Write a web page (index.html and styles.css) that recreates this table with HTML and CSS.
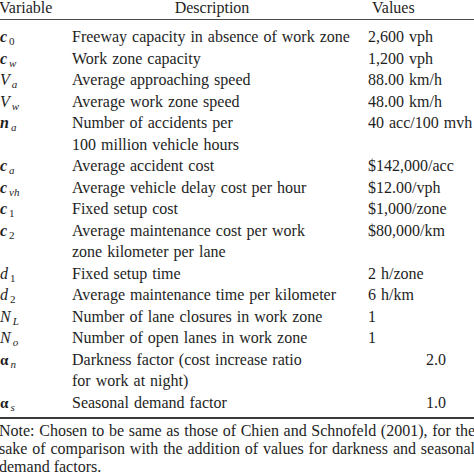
FILE: index.html
```html
<!DOCTYPE html>
<html>
<head>
<meta charset="utf-8">
<link rel="stylesheet" href="styles.css">
</head>
<body>
<div class="page">
  <div class="head">
    <div class="c1">Variable</div>
    <div class="c2 center">Description</div>
    <div class="c3 hv">Values</div>
  </div>
  <div class="body">
    <div class="row"><div class="c1"><b class="v">c</b><sub class="up">0</sub></div><div class="c2">Freeway capacity in absence of work zone</div><div class="c3">2,600 vph</div></div>
    <div class="row"><div class="c1"><b class="v">c</b><sub>w</sub></div><div class="c2">Work zone capacity</div><div class="c3">1,200 vph</div></div>
    <div class="row"><div class="c1"><i class="v">V</i><sub>a</sub></div><div class="c2">Average approaching speed</div><div class="c3">88.00 km/h</div></div>
    <div class="row"><div class="c1"><i class="v">V</i><sub>w</sub></div><div class="c2">Average work zone speed</div><div class="c3">48.00 km/h</div></div>
    <div class="row"><div class="c1"><b class="v">n</b><sub>a</sub></div><div class="c2">Number of accidents per<br>100 million vehicle hours</div><div class="c3">40 acc/100 mvh</div></div>
    <div class="row"><div class="c1"><b class="v">c</b><sub>a</sub></div><div class="c2">Average accident cost</div><div class="c3">$142,000/acc</div></div>
    <div class="row"><div class="c1"><b class="v">c</b><sub>vh</sub></div><div class="c2">Average vehicle delay cost per hour</div><div class="c3">$12.00/vph</div></div>
    <div class="row"><div class="c1"><b class="v">c</b><sub class="up">1</sub></div><div class="c2">Fixed setup cost</div><div class="c3">$1,000/zone</div></div>
    <div class="row"><div class="c1"><b class="v">c</b><sub class="up">2</sub></div><div class="c2">Average maintenance cost per work<br>zone kilometer per lane</div><div class="c3">$80,000/km</div></div>
    <div class="row"><div class="c1"><i class="v">d</i><sub class="up">1</sub></div><div class="c2">Fixed setup time</div><div class="c3">2 h/zone</div></div>
    <div class="row"><div class="c1"><i class="v">d</i><sub class="up">2</sub></div><div class="c2">Average maintenance time per kilometer</div><div class="c3">6 h/km</div></div>
    <div class="row"><div class="c1"><i class="v">N</i><sub>L</sub></div><div class="c2">Number of lane closures in work zone</div><div class="c3">1</div></div>
    <div class="row"><div class="c1"><i class="v">N</i><sub>o</sub></div><div class="c2">Number of open lanes in work zone</div><div class="c3">1</div></div>
    <div class="row"><div class="c1"><b class="a">α</b><sub>n</sub></div><div class="c2">Darkness factor (cost increase ratio<br>for work at night)</div><div class="c3 num">2.0</div></div>
    <div class="row"><div class="c1"><b class="a">α</b><sub>s</sub></div><div class="c2">Seasonal demand factor</div><div class="c3 num">1.0</div></div>
  </div>
  <div class="note">
    <div class="nl just">Note: Chosen to be same as those of Chien and Schnofeld (2001), for the</div>
    <div class="nl just">sake of comparison with the addition of values for darkness and seasonal</div>
    <div class="nl">demand factors.</div>
  </div>
</div>
</body>
</html>
```
FILE: styles.css
```css
html, body {
  margin: 0;
  padding: 0;
  background: #ffffff;
}
.page {
  width: 474px;
  height: 474px;
  overflow: hidden;
  font-family: "Liberation Serif", "Times New Roman", serif;
  font-size: 16px;
  color: #1e1e1e;
}
.head {
  display: grid;
  grid-template-columns: 72px 296px 1fr;
  height: 19px;
  line-height: 16px;
  border-bottom: 1.5px solid #4a4a4a;
  margin-left: -1px;
  word-spacing: 1px;
}
.center { text-align: center; padding-right: 14px; }
.hv { padding-left: 5px; }
.body {
  padding-top: 6px;
  padding-bottom: 3px;
  border-bottom: 2px solid #3a3a3a;
  word-spacing: 1px;
}
.row {
  display: grid;
  grid-template-columns: 72px 296px 1fr;
  line-height: 21.5px;
}
.num { padding-left: 58px; }
.v { font-style: italic; font-weight: bold; }
i.v { font-weight: normal; }
.a { font-weight: bold; font-size: 15px; }
sub {
  font-size: 11px;
  font-style: italic;
  vertical-align: -3px;
  line-height: 0;
  margin-left: 2px;
}
sub.up { font-style: normal; }
.note {
  padding-top: 3px;
  line-height: 18px;
  margin-left: -1px;
  width: 476px;
  word-spacing: 0;
}
.nl { white-space: nowrap; }
.just {
  white-space: normal;
  text-align: justify;
  text-align-last: justify;
}
```
